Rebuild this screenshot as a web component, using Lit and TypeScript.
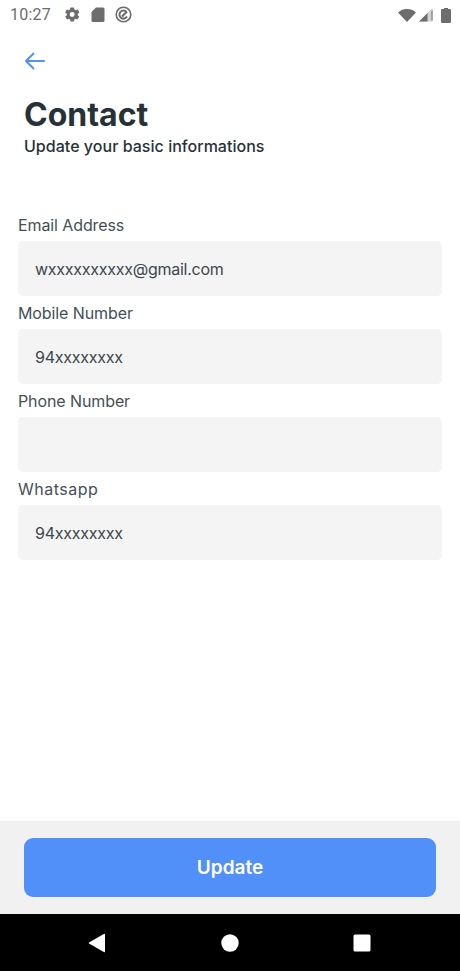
import { LitElement, html, css } from "lit";
import { customElement } from "lit/decorators.js";

const fields = [
  { label: "Email Address", value: "wxxxxxxxxxx@gmail.com", wide: false },
  { label: "Mobile Number", value: "94xxxxxxxx", wide: false },
  { label: "Phone Number", value: "", wide: false },
  { label: "Whatsapp", value: "94xxxxxxxx", wide: true },
];

@customElement("app-root")
export class AppRoot extends LitElement {
  static styles = css`
    :host { display: block; width: 460px; height: 972px; background: #fff; font-family: Inter, "Liberation Sans", sans-serif; }
    .page { display: flex; flex-direction: column; height: 971px; }
    .status { height: 29px; flex: none; display: flex; align-items: center; padding: 0 8px 0 10px; color: #6d6d6d; }
    .time { font-family: Roboto, sans-serif; font-size: 16px; letter-spacing: 0.2px; width: 54px; }
    .sicons { display: flex; align-items: center; gap: 9px; }
    .spacer { flex: 1; }
    .ricons { display: flex; align-items: center; gap: 3px; }
    .back { height: 20px; margin: 22px 0 0 24px; display: flex; }
    .head { padding: 24px 24px 0; }
    h1 { margin: 0; font-size: 32px; line-height: 40px; font-weight: 700; color: #263238; letter-spacing: 0; }
    .sub { font-size: 16px; line-height: 22px; font-weight: 500; color: #263238; letter-spacing: 0.03px; }
    form { display: flex; flex-direction: column; padding: 56px 18px 0; flex: 1; }
    label { display: block; font-size: 16px; line-height: 24px; height: 24px; color: #455056; letter-spacing: -0.1px; margin-bottom: 4px; }
    label.wide { letter-spacing: 0.5px; }
    .input { height: 55px; margin-bottom: 5px; background: #f4f4f4; border-radius: 5px; display: flex; align-items: center; padding-left: 17px; font-size: 16px; color: #3c474d; letter-spacing: -0.25px; }
    .foot { height: 93px; flex: none; box-sizing: border-box; background: #f1f1f1; padding: 17px 24px; }
    button { width: 100%; height: 59px; border: 0; border-radius: 9px; background: #5290f9; color: #fff; font: 600 19px Inter, sans-serif; }
    .nav { height: 57px; flex: none; background: #000; display: flex; align-items: center; justify-content: space-between; padding: 0 89px 0 88px; }
    .batt { margin-left: 4px; }
  `;

  render() {
    return html`<div class="page">
      <div class="status">
        <span class="time">10:27</span>
        <div class="sicons">
          <svg width="17" height="17" viewBox="0 0 24 24" fill="#6d6d6d"><path d="M19.4 13c.1-.3.1-.6.1-1s0-.7-.1-1l2.1-1.6c.2-.2.2-.4.1-.6l-2-3.5c-.1-.2-.4-.3-.6-.2l-2.5 1c-.5-.4-1.1-.7-1.7-1L14 2.4c0-.2-.2-.4-.5-.4h-4c-.2 0-.4.2-.5.4l-.4 2.7c-.6.2-1.1.6-1.700 1l-2.500-1c-.2-.1-.5 0-.6.2l-2 3.500c-.1.2-.1.5.1.6L4.100 11c0 .3-.1.7-.1 1s0 .7.1 1l-2.100 1.600c-.2.2-.2.4-.1.6l2 3.500c.1.2.4.3.6.2l2.500-1c.5.4 1.100.7 1.700 1l.4 2.700c0 .2.2.4.5.4h4c.2 0 .5-.2.5-.4l.4-2.700c.6-.2 1.100-.6 1.700-1l2.500 1c.2.1.5 0 .6-.2l2-3.500c.1-.2.1-.5-.1-.6L19.400 13zM11.500 15.500a3.500 3.500 0 1 1 0-7 3.500 3.500 0 0 1 0 7z"/></svg>
          <svg width="16" height="17" viewBox="0 0 16 17" fill="#6d6d6d"><path d="M6 1.500h7a1.500 1.500 0 0 1 1.500 1.500v11.500A1.500 1.500 0 0 1 13 16H3a1.500 1.500 0 0 1-1.500-1.500V6z"/></svg>
          <svg width="17" height="17" viewBox="0 0 17 17" fill="none" stroke="#6d6d6d"><circle cx="8.500" cy="8.500" r="7.300" stroke-width="1.600"/><path d="M11.500 6A4 4 0 1 0 12 10.500" stroke-width="2"/><path d="M7 10.500 12 5.500" stroke-width="2.200"/></svg>
        </div>
        <div class="spacer"></div>
        <div class="ricons">
          <svg width="18" height="14" viewBox="0 0 18 14" fill="#6d6d6d"><path d="M0 4.500C2.500 2 5.500 1 9 1s6.500 1 9 3.500L9 14z"/></svg>
          <svg width="14" height="14" viewBox="0 0 14 14"><path d="M0 13.500 13.500 0v13.500z" fill="#d3d3d3"/><path d="M0 13.500 8.500 5v8.500zM12.500 3v9.500h1V2z" fill="#6d6d6d"/></svg>
          <svg class="batt" width="12" height="16" viewBox="0 0 12 16" fill="#6d6d6d"><path d="M4 1h4v1h2a1 1 0 0 1 1 1v12a1 1 0 0 1-1 1H2a1 1 0 0 1-1-1V3a1 1 0 0 1 1-1h2z"/></svg>
        </div>
      </div>
      <div class="back">
        <svg width="21" height="20" viewBox="0 0 21 20" fill="none" stroke="#5290f9" stroke-width="2" stroke-linecap="round" stroke-linejoin="round"><path d="M20 10H2M9.500 2.500 2 10l7.500 7.500"/></svg>
      </div>
      <div class="head">
        <h1>Contact</h1>
        <div class="sub">Update your basic informations</div>
      </div>
      <form>
        ${fields.map(
          (f) => html`<label class=${f.wide ? "wide" : ""}>${f.label}</label><div class="input">${f.value}</div>`
        )}
      </form>
      <div class="foot"><button>Update</button></div>
      <div class="nav">
        <svg width="18" height="20" viewBox="0 0 18 20" fill="#fff"><path d="M17 1.500v17a.8.8 0 0 1-1.200.6L1 10.500a.6.6 0 0 1 0-1L15.800.900A.8.8 0 0 1 17 1.500z"/></svg>
        <svg width="18" height="18" viewBox="0 0 18 18" fill="#fff"><circle cx="9" cy="9" r="8.700"/></svg>
        <svg width="18" height="18" viewBox="0 0 18 18" fill="#fff"><rect x="0.500" y="0.500" width="17" height="17" rx="1.500"/></svg>
      </div>
    </div>`;
  }
}
